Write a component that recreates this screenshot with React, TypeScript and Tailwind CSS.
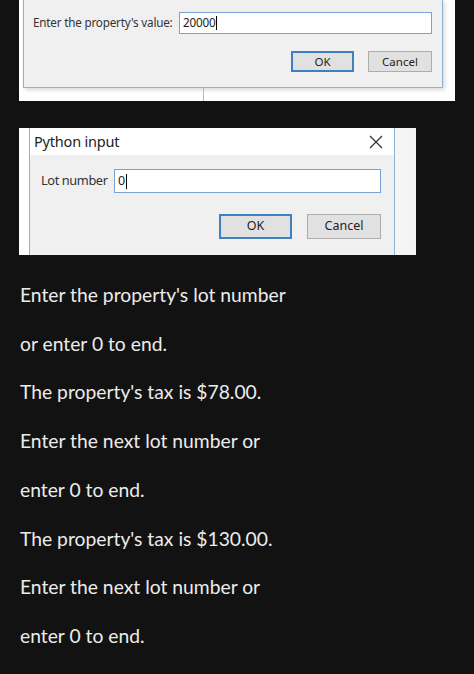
const lines = [
  "Enter the property's lot number",
  'or enter 0 to end.',
  "The property's tax is $78.00.",
  'Enter the next lot number or',
  'enter 0 to end.',
  "The property's tax is $130.00.",
  'Enter the next lot number or',
  'enter 0 to end.',
];

const ui = { fontFamily: '"Noto Sans", "Liberation Sans", sans-serif' };

function WinButton({ label, primary }: { label: string; primary?: boolean }) {
  return (
    <div
      className={`flex h-full w-full items-center justify-center bg-[#e1e1e1] text-[#222] ${
        primary ? 'border-2 border-[#3f80c0]' : 'border border-[#adadad]'
      }`}
    >
      {label}
    </div>
  );
}

export default function App() {
  return (
    <div className="min-h-screen w-[474px] bg-[#121212] pb-6" style={ui}>
      {/* first screenshot, cut off at the top */}
      <div className="ml-[19px] flex h-[101px] w-[436px] flex-col bg-white">
        <div className="ml-[4px] flex h-[88px] w-[420px] flex-col border-x border-b border-[#8fb0d8] bg-[#f0f0f0] pl-[9px] pr-[10px] pt-[12px] shadow-[2px_2px_4px_rgba(0,0,0,0.15)]">
          <div className="flex items-center">
            <span className="w-[146px] text-[11.7px] tracking-[-0.2px] text-[#333]">Enter the property's value:</span>
            <div className="flex h-[22px] flex-1 items-center border border-[#7ba2d4] bg-white pl-[3px] text-[11.7px] tracking-[-0.2px] text-[#222]">
              20000<span className="ml-px h-[14px] w-px bg-black" />
            </div>
          </div>
          <div className="mt-[17px] flex justify-end gap-[14px] text-[11.5px]">
            <div className="h-[21px] w-[63px]"><WinButton label="OK" primary /></div>
            <div className="h-[21px] w-[64px]"><WinButton label="Cancel" /></div>
          </div>
        </div>
        <div className="ml-[184px] h-[13px] w-px bg-[#b5b5b5]" />
      </div>

      {/* second screenshot */}
      <div className="ml-[19px] mt-[27px] flex h-[127px] w-[397px] bg-gradient-to-r from-white via-white to-[#f4f4f4]">
        <div className="ml-[10px] flex w-[366px] flex-col border-x border-[#8fb0d8] bg-[#f0f0f0]">
          <div className="flex h-[27px] items-center justify-between bg-white pl-[4px] pr-[11px]">
            <span className="text-[14.5px] tracking-[-0.2px] text-[#222]">Python input</span>
            <svg width="14" height="14" viewBox="0 0 14 14" className="text-[#333]">
              <path d="M1 1L13 13M13 1L1 13" stroke="currentColor" strokeWidth="1.2" fill="none" />
            </svg>
          </div>
          <div className="flex flex-col pl-[11px] pr-[13px] pt-[14px]">
            <div className="flex items-center">
              <span className="w-[73px] text-[12.8px] tracking-[-0.4px] text-[#333]">Lot number</span>
              <div className="flex h-[24px] flex-1 items-center border border-[#7ba2d4] bg-white pl-[3px] text-[12.5px] text-[#222]">
                0<span className="ml-px h-[15px] w-px bg-black" />
              </div>
            </div>
            <div className="mt-[21px] flex justify-end gap-[15px] text-[12.5px]">
              <div className="h-[25px] w-[73px]"><WinButton label="OK" primary /></div>
              <div className="h-[25px] w-[74px]"><WinButton label="Cancel" /></div>
            </div>
          </div>
        </div>
      </div>

      {/* console output */}
      <div className="mt-[16px] pl-[20px] text-[19.3px] leading-[48.7px] text-[#ececec]" style={{ fontFamily: 'Lato, "Noto Sans", sans-serif' }}>
        {lines.map((l, i) => (
          <p key={i}>{l}</p>
        ))}
      </div>
    </div>
  );
}
